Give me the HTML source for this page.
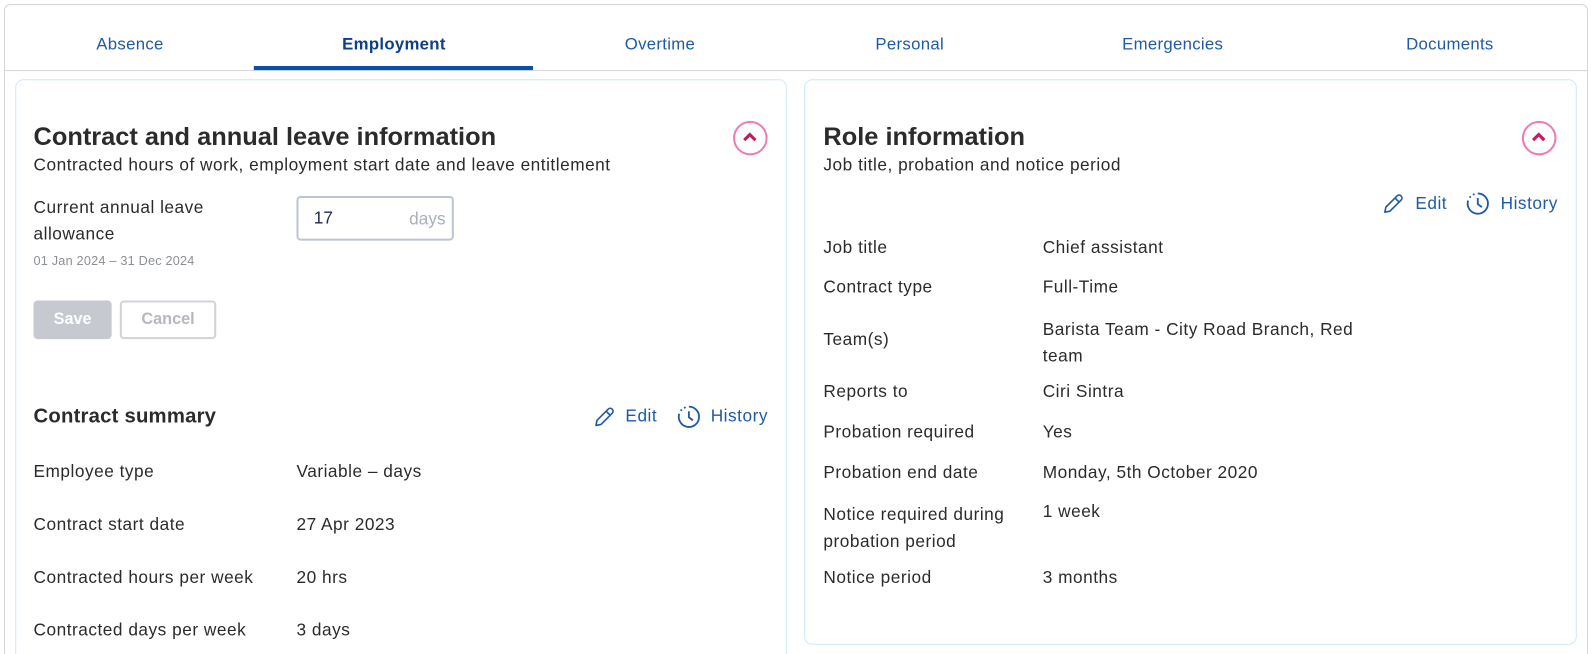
<!DOCTYPE html>
<html style="width:1591px;height:654px;overflow:hidden"><head><meta charset="utf-8"><style>
*{box-sizing:border-box;margin:0;padding:0}
body{width:1591px;height:654px;overflow:hidden;background:#fff;font-family:"Liberation Sans",sans-serif;color:#2b2b2b;position:relative}
#w{position:absolute;left:0;top:0;width:1567px;height:644px;overflow:hidden;transform:scale(1.0153);transform-origin:0 0}
.frame{position:absolute;left:4px;top:4px;width:1560px;height:660px;border:1px solid #d4d6da;border-radius:6px}
.tabs{position:absolute;left:5px;top:5px;width:1558px;height:65px;border-bottom:1px solid #d4d6da}
.tab{position:absolute;top:35px;font-size:16.5px;letter-spacing:0.3px;color:#1f5aa6;transform:translateX(-50%)}
.tab.active{font-weight:bold;color:#0b3f8c}
.uline{position:absolute;left:250px;top:65px;width:275px;height:4px;background:#0a4fa8}
.card{position:absolute;border:1px solid #cfe9f6;border-radius:8px}
.abs{position:absolute;white-space:nowrap}
h2{font-size:25px;font-weight:bold;color:#2b2b2b;letter-spacing:0}
.sub,.lbl,.link{font-size:17px;letter-spacing:0.5px}
.circ{position:absolute;width:34px;height:34px;border:2.5px solid #f07ab2;border-radius:50%}
.link{color:#1f5aa6}
</style></head><body><div id="w">
<div class="frame"></div>
<div class="tabs"></div>
<div class="tab" style="left:128px">Absence</div>
<div class="tab active" style="left:388px">Employment</div>
<div class="tab" style="left:650px">Overtime</div>
<div class="tab" style="left:896px">Personal</div>
<div class="tab" style="left:1155px">Emergencies</div>
<div class="tab" style="left:1428px">Documents</div>
<div class="uline"></div>

<div class="card" style="left:15px;top:78px;width:760px;height:600px"></div>
<div class="card" style="left:792px;top:78px;width:761px;height:557px"></div>

<h2 class="abs" style="left:33px;top:121px">Contract and annual leave information</h2>
<div class="abs sub" style="left:33px;top:153px">Contracted hours of work, employment start date and leave entitlement</div>
<div class="circ" style="left:722px;top:119px"><svg width="29" height="29" viewBox="0 0 29 29"><path d="M9 17l5.5-5.5L20 17" fill="none" stroke="#c8175f" stroke-width="3"/></svg></div>
<div class="abs lbl" style="left:33px;top:192px;line-height:26px">Current annual leave<br>allowance</div>
<div class="abs" style="left:33px;top:250px;font-size:12.5px;color:#8c8f94;letter-spacing:0.2px">01 Jan 2024 – 31 Dec 2024</div>
<div class="abs" style="left:292px;top:193px;width:155px;height:44px;border:2px solid #bcc6d2;border-radius:4px"></div>
<div class="abs" style="left:309px;top:205px;font-size:17px;color:#1e2a44">17</div>
<div class="abs" style="left:403px;top:206px;font-size:17px;color:#a9b0b9">days</div>
<div class="abs" style="left:33px;top:296px;width:77px;height:38px;background:#c6c9cf;border-radius:4px;color:#fff;font-weight:bold;font-size:16px;text-align:center;line-height:38px">Save</div>
<div class="abs" style="left:118px;top:296px;width:95px;height:38px;border:2px solid #d0d3d8;border-radius:4px;color:#b5b9bf;font-weight:bold;font-size:16px;text-align:center;line-height:34px">Cancel</div>
<div class="abs" style="left:33px;top:399px;font-size:20px;font-weight:bold;letter-spacing:0.2px">Contract summary</div>
<svg class="abs" style="left:584px;top:400px" width="22" height="22" viewBox="0 0 22 22"><path d="M3 19l1-5L15 3a2.5 2.5 0 0 1 4 4L8 18z M13 5l4 4" fill="none" stroke="#1f5aa6" stroke-width="1.6" stroke-linejoin="round"/></svg>
<div class="abs link" style="left:616px;top:400px">Edit</div>
<svg class="abs" style="left:666px;top:398px" width="25" height="25" viewBox="0 0 25 25"><path d="M12.5 2.5a10 10 0 1 1-9.5 7" fill="none" stroke="#1f5aa6" stroke-width="1.8"/><path d="M12.5 7v6l4 3" fill="none" stroke="#1f5aa6" stroke-width="1.8"/><circle cx="5" cy="6" r="1" fill="#1f5aa6"/><circle cx="8.5" cy="3.5" r="1" fill="#1f5aa6"/></svg>
<div class="abs link" style="left:700px;top:400px">History</div>
<div class="abs lbl" style="left:33px;top:455px">Employee type</div><div class="abs lbl" style="left:292px;top:455px">Variable – days</div>
<div class="abs lbl" style="left:33px;top:507px">Contract start date</div><div class="abs lbl" style="left:292px;top:507px">27 Apr 2023</div>
<div class="abs lbl" style="left:33px;top:559px">Contracted hours per week</div><div class="abs lbl" style="left:292px;top:559px">20 hrs</div>
<div class="abs lbl" style="left:33px;top:611px">Contracted days per week</div><div class="abs lbl" style="left:292px;top:611px">3 days</div>

<h2 class="abs" style="left:811px;top:121px">Role information</h2>
<div class="abs sub" style="left:811px;top:153px">Job title, probation and notice period</div>
<div class="circ" style="left:1499px;top:119px"><svg width="29" height="29" viewBox="0 0 29 29"><path d="M9 17l5.5-5.5L20 17" fill="none" stroke="#c8175f" stroke-width="3"/></svg></div>
<svg class="abs" style="left:1361px;top:190px" width="22" height="22" viewBox="0 0 22 22"><path d="M3 19l1-5L15 3a2.5 2.5 0 0 1 4 4L8 18z M13 5l4 4" fill="none" stroke="#1f5aa6" stroke-width="1.6" stroke-linejoin="round"/></svg>
<div class="abs link" style="left:1394px;top:191px">Edit</div>
<svg class="abs" style="left:1443px;top:188px" width="25" height="25" viewBox="0 0 25 25"><path d="M12.5 2.5a10 10 0 1 1-9.5 7" fill="none" stroke="#1f5aa6" stroke-width="1.8"/><path d="M12.5 7v6l4 3" fill="none" stroke="#1f5aa6" stroke-width="1.8"/><circle cx="5" cy="6" r="1" fill="#1f5aa6"/><circle cx="8.5" cy="3.5" r="1" fill="#1f5aa6"/></svg>
<div class="abs link" style="left:1478px;top:191px">History</div>
<div class="abs lbl" style="left:811px;top:234px">Job title</div><div class="abs lbl" style="left:1027px;top:234px">Chief assistant</div>
<div class="abs lbl" style="left:811px;top:273px">Contract type</div><div class="abs lbl" style="left:1027px;top:273px">Full-Time</div>
<div class="abs lbl" style="left:811px;top:325px">Team(s)</div><div class="abs lbl" style="left:1027px;top:312px;line-height:26px">Barista Team - City Road Branch, Red<br>team</div>
<div class="abs lbl" style="left:811px;top:376px">Reports to</div><div class="abs lbl" style="left:1027px;top:376px">Ciri Sintra</div>
<div class="abs lbl" style="left:811px;top:416px">Probation required</div><div class="abs lbl" style="left:1027px;top:416px">Yes</div>
<div class="abs lbl" style="left:811px;top:456px">Probation end date</div><div class="abs lbl" style="left:1027px;top:456px">Monday, 5th October 2020</div>
<div class="abs lbl" style="left:811px;top:493px;line-height:27px">Notice required during<br>probation period</div><div class="abs lbl" style="left:1027px;top:494px">1 week</div>
<div class="abs lbl" style="left:811px;top:559px">Notice period</div><div class="abs lbl" style="left:1027px;top:559px">3 months</div>
</div></body></html>
